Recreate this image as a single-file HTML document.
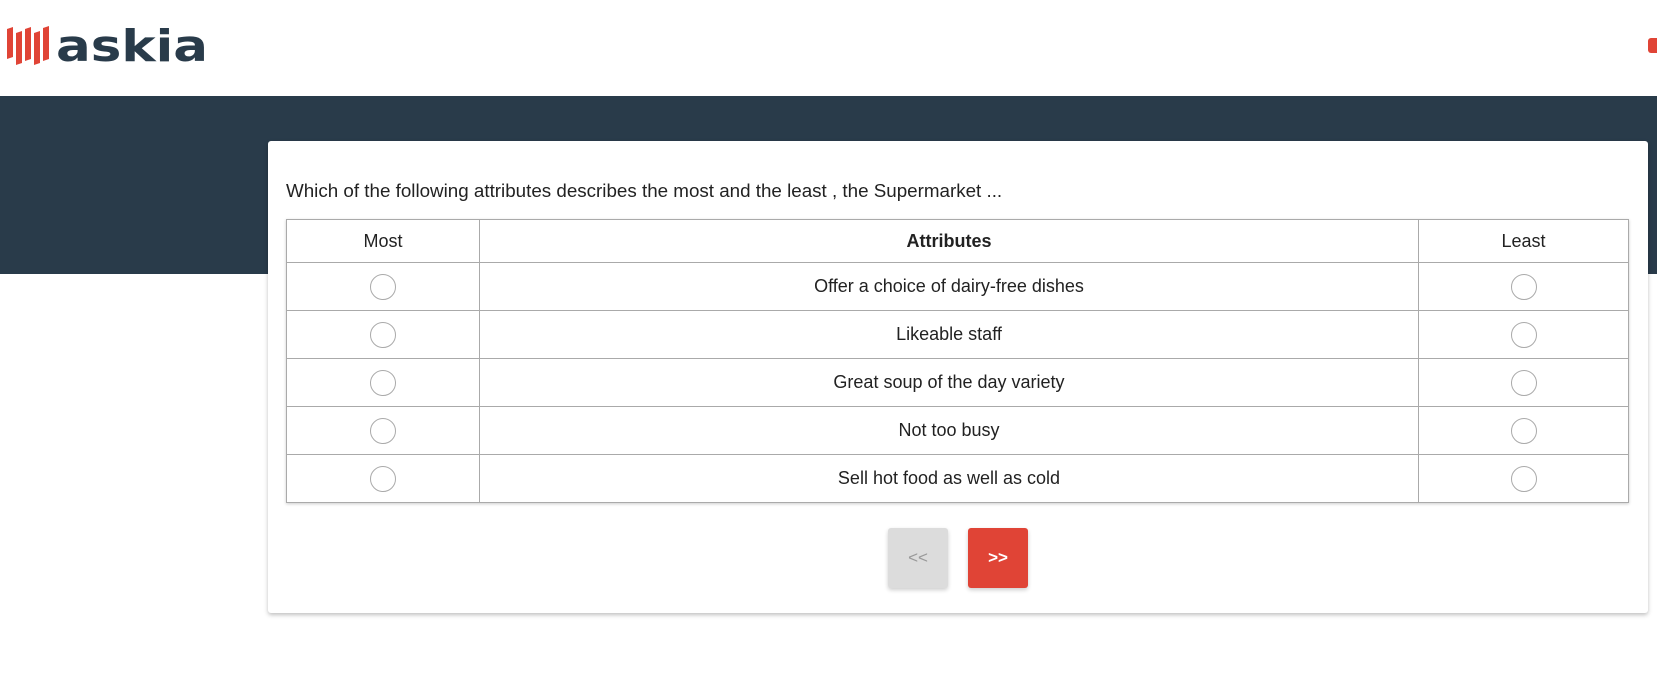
<!DOCTYPE html>
<html><head><style>
body{margin:0;width:1657px;height:693px;background:#fff;font-family:"Liberation Sans",Arial,sans-serif;color:#222;position:relative;overflow:hidden}
.band{position:absolute;left:0;top:96px;width:1657px;height:178px;background:#293b4a}
.card{position:absolute;left:268px;top:141px;width:1380px;height:472px;background:#fff;border-radius:3px;box-shadow:0 2px 4px rgba(0,0,0,.25)}
.q{position:absolute;left:18px;top:39px;font-size:18.8px}
table{position:absolute;left:18px;top:78px;width:1343px;border-collapse:collapse;font-size:18px;box-shadow:0 1px 3px rgba(0,0,0,.2)}
td,th{border:1px solid #aaa;text-align:center;padding:0}
th{height:42px;font-weight:normal}
td{height:47px}
.r{display:inline-block;width:26px;height:26px;border:1px solid #aaa;border-radius:50%;box-sizing:border-box;vertical-align:middle}
.btn{position:absolute;top:387px;width:60px;height:60px;border-radius:3px;box-shadow:0 2px 4px rgba(0,0,0,.2);font-size:17px;font-weight:bold;display:flex;align-items:center;justify-content:center}
</style></head><body>
<svg style="position:absolute;left:6px;top:24px" width="205" height="44" viewBox="0 0 205 44">
<g fill="#e04436">
<polygon points="1,5 7,3 7,33 1,35"/><polygon points="10,9 16,7 16,39 10,41"/><polygon points="19,5 25,3 25,35 19,37"/><polygon points="28,9 34,7 34,39 28,41"/><polygon points="37,4 43,2 43,35 37,37"/>
</g>
<text x="50" y="37" font-family="DejaVu Sans,sans-serif" font-weight="bold" font-size="44" fill="#293b4a" textLength="152" lengthAdjust="spacingAndGlyphs">askia</text>
</svg>
<div style="position:absolute;left:1648px;top:38px;width:12px;height:15px;background:#e04436;border-radius:3px"></div>
<div class="band"></div>
<div class="card">
<div class="q">Which of the following attributes describes the most and the least , the Supermarket ...</div>
<table>
<tr><th style="width:192px">Most</th><th style="font-weight:bold">Attributes</th><th style="width:209px">Least</th></tr>
<tr><td><span class="r"></span></td><td>Offer a choice of dairy-free dishes</td><td><span class="r"></span></td></tr>
<tr><td><span class="r"></span></td><td>Likeable staff</td><td><span class="r"></span></td></tr>
<tr><td><span class="r"></span></td><td>Great soup of the day variety</td><td><span class="r"></span></td></tr>
<tr><td><span class="r"></span></td><td>Not too busy</td><td><span class="r"></span></td></tr>
<tr><td><span class="r"></span></td><td>Sell hot food as well as cold</td><td><span class="r"></span></td></tr>
</table>
<div class="btn" style="left:620px;background:#dcdcdc;color:#999;font-weight:normal">&lt;&lt;</div>
<div class="btn" style="left:700px;background:#e04436;color:#fff">&gt;&gt;</div>
</div>
</body></html>
